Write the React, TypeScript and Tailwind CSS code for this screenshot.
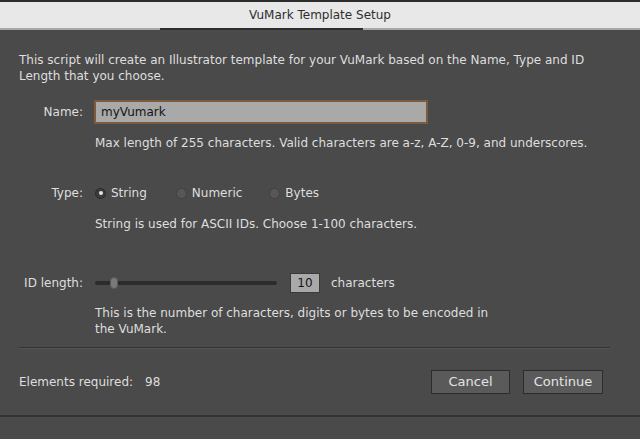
import { useState } from "react";

function Radio({ label, checked, onClick }: { label: string; checked: boolean; onClick: () => void }) {
  return (
    <button onClick={onClick} className="flex items-center gap-[5px]">
      <span
        className={
          checked
            ? "w-[11px] h-[11px] rounded-full bg-[#3c3c3c] border border-[#2a2a2a] flex items-center justify-center"
            : "w-[11px] h-[11px] rounded-full bg-[#575757] border border-[#424242]"
        }
      >
        {checked && <span className="w-[4px] h-[4px] rounded-full bg-[#e6e6e6]" />}
      </span>
      <span>{label}</span>
    </button>
  );
}

export default function App() {
  const [name, setName] = useState("myVumark");
  const [type, setType] = useState("String");
  const [length, setLength] = useState(10);

  return (
    <div className="w-[640px] h-[439px] bg-[#4a4a4a] flex flex-col font-['DejaVu_Sans',sans-serif] text-[12px] text-[#dedede] overflow-hidden">
      <div className="h-[2px] bg-[#2c2c2c]" />
      <div className="h-[26px] bg-[#e8e8e8] flex items-center justify-center text-[12px] text-[#2e2e2e]">
        VuMark Template Setup
      </div>
      <div className="h-[2px] bg-[#a8a8a8] flex">
        <div className="w-[160px]" />
        <div className="w-[203px] bg-[#2e2e2e]" />
      </div>

      <div className="px-[19px] pt-[22px] flex flex-col">
        <p className="leading-[16px] w-[590px]">
          This script will create an Illustrator template for your VuMark based on the Name, Type and ID Length that
          you choose.
        </p>

        <div className="flex items-center mt-[16px] h-[24px]">
          <span className="w-[64px] text-right">Name:</span>
          <input
            value={name}
            onChange={(e) => setName(e.target.value)}
            className="ml-[11px] w-[334px] h-[24px] bg-[#a9a9a9] border-2 border-[#7d5b3b] px-[5px] text-[#141414] outline-none"
          />
        </div>
        <p className="ml-[76px] mt-[11px] leading-[16px]">
          Max length of 255 characters. Valid characters are a-z, A-Z, 0-9, and underscores.
        </p>

        <div className="flex items-center mt-[34px] h-[16px]">
          <span className="w-[64px] text-right">Type:</span>
          <div className="ml-[12px] flex items-center">
            <Radio label="String" checked={type === "String"} onClick={() => setType("String")} />
            <div className="ml-[29px]">
              <Radio label="Numeric" checked={type === "Numeric"} onClick={() => setType("Numeric")} />
            </div>
            <div className="ml-[27px]">
              <Radio label="Bytes" checked={type === "Bytes"} onClick={() => setType("Bytes")} />
            </div>
          </div>
        </div>
        <p className="ml-[76px] mt-[15px] leading-[16px]">String is used for ASCII IDs. Choose 1-100 characters.</p>

        <div className="flex items-center mt-[41px] h-[20px]">
          <span className="w-[64px] text-right">ID length:</span>
          <div className="ml-[12px] w-[182px] h-[12px] relative flex items-center">
            <div className="w-full h-[4px] rounded-full bg-[#2c2c2c]" />
            <div
              className="absolute top-0 w-[8px] h-[12px] rounded-full bg-[#7a7a7a] border border-[#5a5a5a]"
              style={{ left: `${((length - 1) / 99) * 170}px` }}
            />
          </div>
          <input
            value={length}
            onChange={(e) => setLength(Number(e.target.value) || 1)}
            className="ml-[13px] w-[30px] h-[20px] bg-[#a9a9a9] border border-[#3a3a3a] text-[#141414] text-center outline-none"
          />
          <span className="ml-[11px]">characters</span>
        </div>
        <p className="ml-[76px] mt-[12px] leading-[16px] w-[400px]">
          This is the number of characters, digits or bytes to be encoded in the VuMark.
        </p>

        <div className="mt-[10px] w-[591px] h-[2px] bg-[#333333] border-b border-[#555555]" />

        <div className="flex items-center justify-between mt-[21px] h-[24px] w-[584px]">
          <span>
            Elements required:<span className="ml-[12px]">98</span>
          </span>
          <div className="flex gap-[13px]">
            <button className="w-[79px] h-[24px] bg-[#5a5a5a] border border-[#2c2c2c] text-[13px] text-[#e4e4e4]">
              Cancel
            </button>
            <button className="w-[80px] h-[24px] bg-[#5a5a5a] border border-[#2c2c2c] text-[13px] text-[#e4e4e4]">
              Continue
            </button>
          </div>
        </div>
      </div>

      <div className="mt-auto h-[24px] border-t-2 border-[#333333]" />
    </div>
  );
}
